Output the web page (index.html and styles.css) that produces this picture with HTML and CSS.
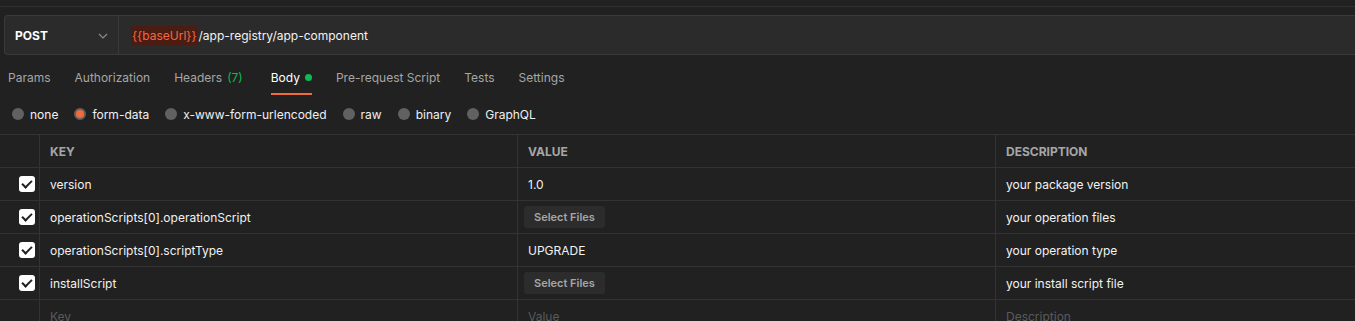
FILE: index.html
```html
<!DOCTYPE html>
<html lang="en">
  <head>
    <meta charset="UTF-8" />
    <meta name="viewport" content="width=device-width, initial-scale=1.0" />
    <title>Request Body</title>
    <link rel="stylesheet" href="styles.css">
  </head>
  <body>
    <div class="request_topbar"></div>

    <div class="request_url-bar">
      <div class="request_method">
        <span>POST</span>
        <svg class="request_chevron" width="10" height="6" viewBox="0 0 10 6">
          <path d="M1 1 L5 5 L9 1" fill="none" stroke="#8a8a8a" stroke-width="1.2" />
        </svg>
      </div>
      <div class="request_url">
        <span class="request_var">{{baseUrl}}</span><span>/app-registry/app-component</span>
      </div>
    </div>

    <div class="request_tabs">
      <div class="request_tab">Params</div>
      <div class="request_tab">Authorization</div>
      <div class="request_tab">Headers <span class="request_count">(7)</span></div>
      <div class="request_tab request_tab-active">Body <span class="request_dot"></span></div>
      <div class="request_tab">Pre-request Script</div>
      <div class="request_tab">Tests</div>
      <div class="request_tab">Settings</div>
    </div>

    <div class="body_modes">
      <label class="body_mode"><span class="body_radio"></span>none</label>
      <label class="body_mode"><span class="body_radio body_radio-on"></span>form-data</label>
      <label class="body_mode"><span class="body_radio"></span>x-www-form-urlencoded</label>
      <label class="body_mode"><span class="body_radio"></span>raw</label>
      <label class="body_mode"><span class="body_radio"></span>binary</label>
      <label class="body_mode"><span class="body_radio"></span>GraphQL</label>
    </div>

    <div class="params_table">
      <div class="params_row params_head">
        <div class="params_cell params_check"></div>
        <div class="params_cell">KEY</div>
        <div class="params_cell">VALUE</div>
        <div class="params_cell">DESCRIPTION</div>
      </div>

      <div class="params_row">
        <div class="params_cell params_check"><span class="params_box"></span></div>
        <div class="params_cell">version</div>
        <div class="params_cell">1.0</div>
        <div class="params_cell">your package version</div>
      </div>

      <div class="params_row">
        <div class="params_cell params_check"><span class="params_box"></span></div>
        <div class="params_cell">operationScripts[0].operationScript</div>
        <div class="params_cell params_value-file"><span class="params_btn-file">Select Files</span></div>
        <div class="params_cell">your operation files</div>
      </div>

      <div class="params_row">
        <div class="params_cell params_check"><span class="params_box"></span></div>
        <div class="params_cell">operationScripts[0].scriptType</div>
        <div class="params_cell">UPGRADE</div>
        <div class="params_cell">your operation type</div>
      </div>

      <div class="params_row">
        <div class="params_cell params_check"><span class="params_box"></span></div>
        <div class="params_cell">installScript</div>
        <div class="params_cell params_value-file"><span class="params_btn-file">Select Files</span></div>
        <div class="params_cell">your install script file</div>
      </div>

      <div class="params_row params_empty">
        <div class="params_cell params_check"></div>
        <div class="params_cell">Key</div>
        <div class="params_cell">Value</div>
        <div class="params_cell">Description</div>
      </div>
    </div>
  </body>
</html>
```

FILE: styles.css
```css
body {
  margin: 0;
  background-color: #212121;
  color: #f0f0f0;
  font-family: Inter, "Noto Sans", sans-serif;
  font-size: 12px;
  overflow: hidden;
}

.request_topbar {
  height: 6px;
  border-bottom: 1px solid #2f2f2f;
}

.request_url-bar {
  display: flex;
  height: 38px;
  margin-top: 8px;
  margin-left: 4px;
  background-color: #2b2b2b;
  border: 1px solid #3a3a3a;
  border-right: none;
  border-radius: 4px 0 0 4px;
}

.request_method {
  width: 114px;
  display: flex;
  align-items: center;
  justify-content: space-between;
  padding-left: 10px;
  padding-right: 10px;
  box-sizing: border-box;
  border-right: 1px solid #3a3a3a;
  font-weight: 700;
  color: #fff;
}

.request_chevron {
  margin-top: 1px;
}

.request_url {
  display: flex;
  align-items: center;
  padding-left: 12px;
  color: #f2f2f2;
}

.request_var {
  background-color: #4a1c12;
  color: #f06a48;
  padding: 2px 1px;
  margin-right: 1px;
}

.request_tabs {
  display: flex;
  height: 40px;
  padding-left: 8px;
  gap: 24px;
  color: #a6a6a6;
}

.request_tab {
  display: flex;
  align-items: center;
  gap: 5px;
  height: 100%;
  box-sizing: border-box;
  padding-top: 7px;
  border-bottom: 2px solid transparent;
}

.request_tab-active {
  color: #fff;
  border-bottom-color: #f26b3a;
  margin-left: 4px;
}

.request_count {
  color: #0cbb52;
}

.request_dot {
  width: 7px;
  height: 7px;
  border-radius: 50%;
  background-color: #0cbb52;
}

.body_modes {
  display: flex;
  height: 40px;
  box-sizing: border-box;
  align-items: center;
  padding-left: 12px;
  padding-bottom: 1px;
  gap: 16px;
  color: #f0f0f0;
  border-bottom: 1px solid #333;
}

.body_mode {
  display: flex;
  align-items: center;
  gap: 6px;
}

.body_radio {
  width: 12px;
  height: 12px;
  border-radius: 50%;
  background-color: #616161;
  box-sizing: border-box;
}

.body_radio-on {
  background-color: #f26b3a;
  border: 2px solid #616161;
}

.params_row {
  display: grid;
  grid-template-columns: 39px 478px 478px 1fr;
  height: 33px;
  border-bottom: 1px solid #333;
  box-sizing: border-box;
}

.params_cell {
  display: flex;
  align-items: center;
  padding-left: 10px;
  border-left: 1px solid #333;
  color: #f2f2f2;
}

.params_check {
  border-left: none;
  justify-content: flex-end;
  padding-left: 0;
  padding-right: 4px;
}

.params_head .params_cell {
  font-weight: 700;
  color: #a6a6a6;
}

.params_box {
  width: 16px;
  height: 16px;
  border-radius: 3px;
  background-color: #fff;
  position: relative;
}

.params_box::after {
  content: "";
  position: absolute;
  left: 5px;
  top: 2px;
  width: 4px;
  height: 8px;
  border-right: 2px solid #212121;
  border-bottom: 2px solid #212121;
  transform: rotate(45deg);
}

.params_value-file {
  padding-left: 6px;
}

.params_btn-file {
  background-color: #2c2c2c;
  color: #a6a6a6;
  font-size: 11px;
  font-weight: 600;
  padding: 4px 10px;
  border-radius: 3px;
}

.params_empty .params_cell {
  color: #5a5a5a;
}
```
